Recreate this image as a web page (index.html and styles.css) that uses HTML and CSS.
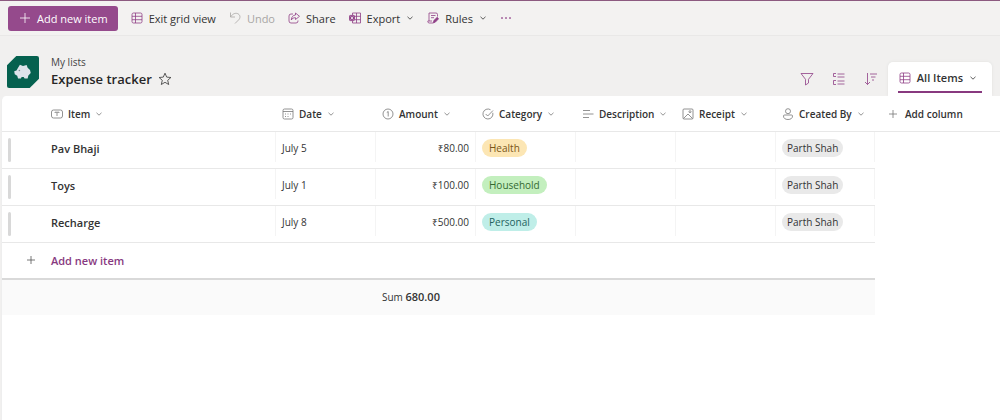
FILE: index.html
```html
<!DOCTYPE html>
<html lang="en">
<head>
  <meta charset="utf-8">
  <title>Expense tracker</title>
  <link rel="stylesheet" href="styles.css">
</head>
<body>
  <!-- shared icons -->
  <svg class="sprite" aria-hidden="true">
    <symbol id="plus" viewBox="0 0 12 12"><path d="M6 1v10M1 6h10"/></symbol>
    <symbol id="chevron" viewBox="0 0 8 8"><path d="M1.5 2.8L4 5.2l2.500-2.400"/></symbol>
    <symbol id="grid" viewBox="0 0 12 12"><rect x="1" y="1" width="10" height="10" rx="1.500"/><path d="M4.500 1v10M1 4.300h10M1 7.700h10"/></symbol>
  </svg>

  <div class="toolbar">
    <button class="primary"><svg class="icon"><use href="#plus"/></svg>Add new item</button>
    <button class="command"><svg class="icon"><use href="#grid"/></svg>Exit grid view</button>
    <button class="command" disabled>
      <svg class="icon" viewBox="0 0 12 12"><path d="M1.500 .5v4.500h4.500M1.700 4.800C3.500 1.800 6.800.4 9.200 1.900c2.400 1.500 2.200 4.300.4 6L6 11.500"/></svg>Undo
    </button>
    <button class="command">
      <svg class="icon" viewBox="0 0 12 12"><path d="M5 2H3a2 2 0 0 0-2 2v5a2 2 0 0 0 2 2h5a2 2 0 0 0 2-2V8.500M7.500 1l4 3.300-4 3.200V5.700C5.500 5.700 4.200 6.300 3.300 8c.1-3 1.700-4.800 4.200-5z"/></svg>Share
    </button>
    <button class="command">
      <svg class="icon" viewBox="0 0 12 12"><path d="M3.500 3V1h8v10h-8V9M7.500 1v10M4 4.300h7.500M6 7.700h5.500"/><rect class="solid" x="0.400" y="3.400" width="5.200" height="5.200" rx="1"/><path class="cut" d="M1.800 4.500l2.400 3M4.200 4.500l-2.400 3"/></svg>Export<svg class="chevron"><use href="#chevron"/></svg>
    </button>
    <button class="command">
      <svg class="icon" viewBox="0 0 12 12"><path d="M10.500 4.500V2.500A1.500 1.500 0 0 0 9 1H2v8H.8v.5A1.500 1.500 0 0 0 2.300 11H6M4 3.500h4.500M4 5.700h3M2 9h3"/><path class="solid" d="M6.300 11l.6-2.500 3.300-3.200 1.400 1.400-3.200 3.400z"/></svg>Rules<svg class="chevron"><use href="#chevron"/></svg>
    </button>
    <button class="command more" aria-label="More">
      <svg class="icon" viewBox="0 0 12 12"><circle class="solid" cx="2" cy="6" r=".5"/><circle class="solid" cx="6" cy="6" r=".5"/><circle class="solid" cx="10" cy="6" r=".5"/></svg>
    </button>
  </div>

  <header class="list-header">
    <svg class="logo" viewBox="0 0 31 31">
      <path fill="#05614f" d="M9 0h20a2 2 0 0 1 2 2v20l-9 9H2a2 2 0 0 1-2-2V9z"/>
      <path fill="#dce3ea" d="M12.500 8.500l3 1.200 3.500-1 1 2.600 2.300 2.200.7 3-2.300 2.300-.7 3h-3l-.8-1.400h-2l-.8 1.400h-2.700l-.8-2.600-2.400-1.400-.5-3 2.200-.8 1.500-2.500z"/>
      <circle fill="#7c8d92" cx="12" cy="14" r=".8"/>
    </svg>
    <div class="titles">
      <a class="crumb" href="#">My lists</a>
      <div class="title-row">
        <h1>Expense tracker</h1>
        <button class="star" aria-label="Favorite"><svg viewBox="0 0 14 14"><path d="M7 1.200l1.700 3.900 4.200.4-3.200 2.800 1 4.200L7 10.300l-3.700 2.200 1-4.200L1.100 5.500l4.200-.4z"/></svg></button>
      </div>
    </div>
    <div class="views">
      <button class="tool" aria-label="Filter"><svg viewBox="0 0 14 14"><path d="M1 1.500h12L8.500 7.300V11L5.500 13V7.300z"/></svg></button>
      <button class="tool" aria-label="Group"><svg viewBox="0 0 14 14"><path d="M4 1.500H1.500v3H4M4 8.500H1.500v4H4M5.500 2h7M5.500 5h7M5.500 9h7M5.500 12h7"/></svg></button>
      <button class="tool" aria-label="Sort"><svg viewBox="0 0 14 14"><path d="M3.500 1v11.500M1 10l2.500 2.500L6 10M6 2h7M7 5h4.500M8 8h2"/></svg></button>
      <button class="tab"><span class="tab-label"><svg class="icon"><use href="#grid"/></svg>All Items<svg class="chevron"><use href="#chevron"/></svg></span></button>
    </div>
  </header>

  <main class="sheet">
    <table>
      <colgroup>
        <col class="col-handle"><col class="col-item"><col class="col"><col class="col"><col class="col"><col class="col"><col class="col"><col class="col"><col>
      </colgroup>
      <thead>
        <tr>
          <td></td>
          <th><button><svg class="icon" viewBox="0 0 12 12"><rect x=".5" y="2" width="11" height="8" rx="2"/><path d="M4 5V4.200h4V5M6 4.200V8"/></svg>Item<svg class="chevron"><use href="#chevron"/></svg></button></th>
          <th><button><svg class="icon" viewBox="0 0 12 12"><rect x="1" y="1" width="10" height="10" rx="1.500"/><path d="M1 3.500h10M3 6h1M5.500 6h1M8 6h1M3 8.500h1M5.500 8.500h1"/></svg>Date<svg class="chevron"><use href="#chevron"/></svg></button></th>
          <th><button><svg class="icon" viewBox="0 0 12 12"><circle cx="6" cy="6" r="5"/><path d="M4.800 4.500L6.200 3.500v5"/></svg>Amount<svg class="chevron"><use href="#chevron"/></svg></button></th>
          <th><button><svg class="icon" viewBox="0 0 12 12"><path d="M10.800 4.800A5 5 0 1 1 8.500 1.700M3.700 6l2 2L11 2.500"/></svg>Category<svg class="chevron"><use href="#chevron"/></svg></button></th>
          <th><button><svg class="icon" viewBox="0 0 12 12"><path d="M1 2.500h7M1 6h10.500M1 9.500h6"/></svg>Description<svg class="chevron"><use href="#chevron"/></svg></button></th>
          <th><button><svg class="icon" viewBox="0 0 12 12"><rect x="1" y="1" width="10" height="10" rx="1"/><path d="M1.500 10.500L6 6l4.500 4.500"/><circle cx="8" cy="3.700" r="1"/></svg>Receipt<svg class="chevron"><use href="#chevron"/></svg></button></th>
          <th><button><svg class="icon" viewBox="0 0 12 12"><circle cx="6" cy="3.200" r="2.500"/><path d="M2.500 7h7a1 1 0 0 1 1 1c0 2.300-1.800 3.500-4.500 3.500S1.500 10.300 1.500 8a1 1 0 0 1 1-1z"/></svg>Created By<svg class="chevron"><use href="#chevron"/></svg></button></th>
          <th><button class="add-column"><svg class="icon" viewBox="0 0 12 12"><path d="M6 2v8M2 6h8"/></svg>Add column</button></th>
        </tr>
      </thead>
      <tbody>
        <tr>
          <td><div class="handle"></div></td>
          <td class="name">Pav Bhaji</td>
          <td><div class="cell">July 5</div></td>
          <td><div class="cell number">₹80.00</div></td>
          <td><div class="cell"><span class="pill health">Health</span></div></td>
          <td><div class="cell"></div></td>
          <td><div class="cell"></div></td>
          <td><div class="cell last"><span class="pill person">Parth Shah</span></div></td>
        </tr>
        <tr>
          <td><div class="handle"></div></td>
          <td class="name">Toys</td>
          <td><div class="cell">July 1</div></td>
          <td><div class="cell number">₹100.00</div></td>
          <td><div class="cell"><span class="pill household">Household</span></div></td>
          <td><div class="cell"></div></td>
          <td><div class="cell"></div></td>
          <td><div class="cell last"><span class="pill person">Parth Shah</span></div></td>
        </tr>
        <tr>
          <td><div class="handle"></div></td>
          <td class="name">Recharge</td>
          <td><div class="cell">July 8</div></td>
          <td><div class="cell number">₹500.00</div></td>
          <td><div class="cell"><span class="pill personal">Personal</span></div></td>
          <td><div class="cell"></div></td>
          <td><div class="cell"></div></td>
          <td><div class="cell last"><span class="pill person">Parth Shah</span></div></td>
        </tr>
        <tr class="add-row">
          <td colspan="8"><button><svg class="icon" viewBox="0 0 12 12"><path d="M6 2v8M2 6h8"/></svg>Add new item</button></td>
        </tr>
      </tbody>
      <tfoot>
        <tr>
          <td colspan="3"></td>
          <td colspan="5" class="sum">Sum <b>680.00</b></td>
        </tr>
      </tfoot>
    </table>
  </main>
</body>
</html>
```
FILE: styles.css
```css
* {
  box-sizing: border-box;
}

body {
  margin: 0;
  min-height: 100vh;
  display: flex;
  flex-direction: column;
  background: #f1f0ef;
  border-top: 1px solid #8c5a80;
  color: #333;
  font-family: "Open Sans", "Noto Sans", sans-serif;
  font-size: 10px;
}

button {
  display: flex;
  align-items: center;
  margin: 0;
  padding: 0;
  border: 0;
  background: none;
  color: inherit;
  font: inherit;
  white-space: nowrap;
}

svg {
  flex: none;
  fill: none;
  stroke: currentColor;
  stroke-width: 0.8;
}

.sprite {
  display: none;
}

.icon {
  width: 12px;
  height: 12px;
}

.chevron {
  width: 8px;
  height: 8px;
}

.solid {
  fill: currentColor;
}

.cut {
  stroke: #fff;
}

/* command bar */
.toolbar {
  display: flex;
  align-items: center;
  gap: 13px;
  height: 35px;
  padding: 0 8px;
  background: #f3f2f1;
  border-bottom: 1px solid #e9e8e7;
  font-size: 11px;
}

.primary {
  height: 25px;
  padding: 0 10px 0 11px;
  gap: 6px;
  border-radius: 3px;
  background: #954a8c;
  color: #fff;
}

.command {
  gap: 6px;
}

.command .icon {
  color: #8f3f87;
}

.command:disabled,
.command:disabled .icon {
  color: #a8a6a4;
}

/* title and views */
.list-header {
  display: flex;
  height: 60px;
  padding: 0 8px 0 7px;
}

.logo {
  width: 32px;
  height: 32px;
  margin-top: 20px;
  stroke: none;
}

.titles {
  margin: 19px 0 0 12px;
}

.crumb {
  display: block;
  color: #444;
  font-size: 10px;
  line-height: 14px;
  text-decoration: none;
}

.title-row {
  display: flex;
  align-items: center;
  gap: 6px;
}

h1 {
  margin: 0;
  color: #262626;
  font-size: 13px;
  font-weight: 600;
  line-height: 20px;
}

.star svg {
  width: 14px;
  height: 14px;
}

.views {
  display: flex;
  margin: 26px 0 0 auto;
}

.tool {
  width: 32px;
  justify-content: center;
  color: #8f3f87;
}

.tool svg {
  width: 14px;
  height: 14px;
}

.tab {
  align-items: flex-start;
  margin-left: 1px;
  padding: 0 10px;
  border-radius: 5px 5px 0 0;
  background: #fff;
  box-shadow: 0 0 3px #e0dfde;
  clip-path: inset(-3px -3px 0 -3px);
  font-size: 11px;
  font-weight: 600;
}

.tab-label {
  display: flex;
  align-items: center;
  gap: 6px;
  height: 31px;
  padding: 2px 5px 0 1px;
  border-bottom: 2px solid #88397f;
}

.tab .icon {
  color: #8f3f87;
}

/* grid */
.sheet {
  flex: 1;
  margin-left: 1px;
  background: #fff;
  border-left: 1px solid #eee;
  border-radius: 5px 0 0 0;
}

table {
  width: 100%;
  table-layout: fixed;
  border-collapse: separate;
  border-spacing: 0;
}

th,
td {
  padding: 0;
  border-bottom: 1px solid #e8e8e8;
  vertical-align: top;
}

.col-handle {
  width: 49px;
}

.col-item {
  width: 224px;
}

.col {
  width: 100px;
}

th button {
  height: 35px;
  padding-left: 7px;
  gap: 5px;
  font-weight: 600;
}

th:nth-child(2) button {
  padding-left: 0;
}

th .icon,
th .chevron {
  color: #777;
}

th .add-column {
  padding-left: 12px;
  gap: 6px;
}

.handle {
  width: 3px;
  height: 24px;
  margin: 6px 0 6px 6px;
  border-radius: 2px;
  background: #d8d8d8;
}

.name {
  font-size: 11px;
  font-weight: 600;
  line-height: 34px;
}

.cell {
  display: flex;
  align-items: center;
  height: 30px;
  padding: 2px 6px 0 6px;
  border-left: 1px solid #f4f4f4;
}

.cell.last {
  border-right: 1px solid #f4f4f4;
}

.number {
  justify-content: flex-end;
}

.pill {
  padding: 0 7px;
  border-radius: 9px;
  line-height: 18px;
}

.health {
  background: #fce6b4;
  color: #7a5518;
}

.household {
  background: #c3efbe;
  color: #336a30;
}

.personal {
  background: #bfeee8;
  color: #24635f;
}

.person {
  padding: 0 5px;
  background: #e9e9e9;
}

tbody td {
  height: 37px;
}

.add-row td {
  border-bottom: 2px solid #d9d9d9;
}

.add-row button {
  height: 34px;
  padding-left: 23px;
  gap: 14px;
  color: #88397f;
  font-size: 11px;
  font-weight: 600;
}

.add-row .icon {
  color: #555;
}

tfoot td {
  height: 35px;
  padding-bottom: 2px;
  border-bottom: 0;
  background: #fafafa;
  vertical-align: middle;
}

.sum {
  padding-left: 7px;
}

.sum b {
  font-size: 11px;
  font-weight: 600;
}
```
